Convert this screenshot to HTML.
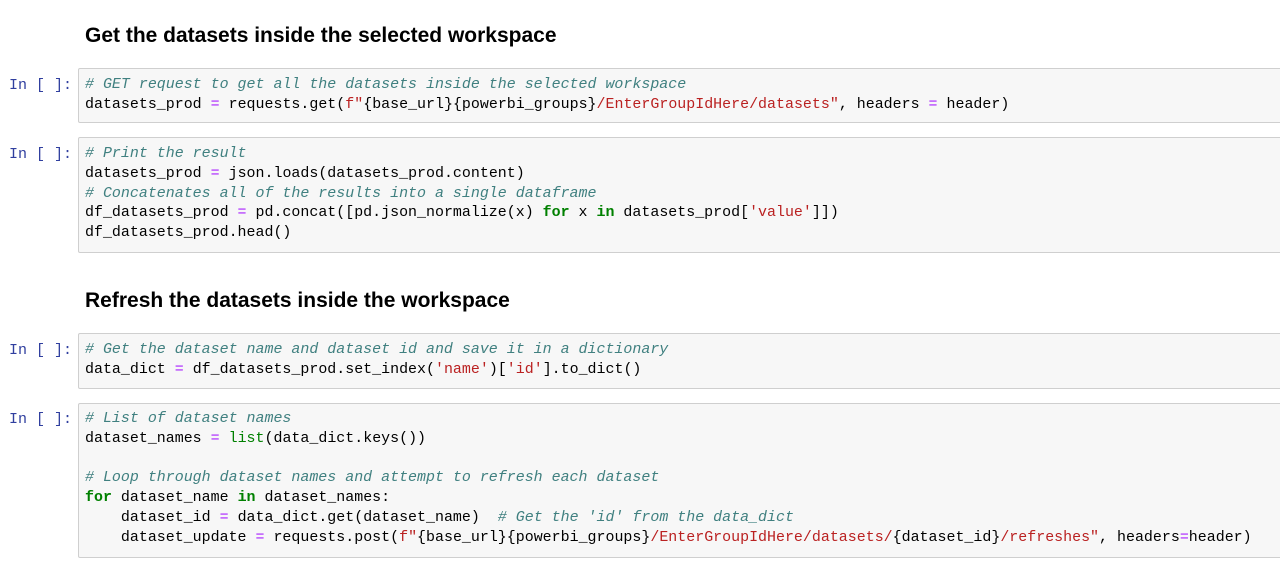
<!DOCTYPE html>
<html><head><meta charset="utf-8"><style>
body{margin:0;width:1280px;height:568px;background:#fff;position:relative;overflow:hidden}
h2{position:absolute;left:85px;margin:0;font:bold 21px "Liberation Sans",sans-serif;color:#000;line-height:24px}
.p{position:absolute;left:9px;font:15px "Liberation Mono",monospace;color:#303F9F;line-height:20px}
.b{position:absolute;left:78px;width:1210px;background:#f7f7f7;border:1px solid #cfcfcf;border-radius:2px;box-sizing:border-box}
pre{position:absolute;left:85px;margin:0;font:14.96px "Liberation Mono",monospace;line-height:19.8px;color:#000}
.c{color:#408080;font-style:italic}.k{color:#008000;font-weight:bold}.s{color:#BA2121}.o{color:#AA22FF}
</style></head><body>
<h2 style="top:24px">Get the datasets inside the selected workspace</h2>
<div class="b" style="top:68px;height:55px"></div>
<div class="p" style="top:76px">In [ ]:</div>
<pre style="top:76px"><span class="c"># GET request to get all the datasets inside the selected workspace</span>
datasets_prod <span class="o">=</span> requests.get(<span class="s">f"</span>{base_url}{powerbi_groups}<span class="s">/EnterGroupIdHere/datasets"</span>, headers <span class="o">=</span> header)</pre>
<div class="b" style="top:137px;height:116px"></div>
<div class="p" style="top:145px">In [ ]:</div>
<pre style="top:145px"><span class="c"># Print the result</span>
datasets_prod <span class="o">=</span> json.loads(datasets_prod.content)
<span class="c"># Concatenates all of the results into a single dataframe</span>
df_datasets_prod <span class="o">=</span> pd.concat([pd.json_normalize(x) <span class="k">for</span> x <span class="k">in</span> datasets_prod[<span class="s">'value'</span>]])
df_datasets_prod.head()</pre>
<h2 style="top:289px">Refresh the datasets inside the workspace</h2>
<div class="b" style="top:333px;height:56px"></div>
<div class="p" style="top:341px">In [ ]:</div>
<pre style="top:341px"><span class="c"># Get the dataset name and dataset id and save it in a dictionary</span>
data_dict <span class="o">=</span> df_datasets_prod.set_index(<span class="s">'name'</span>)[<span class="s">'id'</span>].to_dict()</pre>
<div class="b" style="top:403px;height:155px"></div>
<div class="p" style="top:410px">In [ ]:</div>
<pre style="top:410px"><span class="c"># List of dataset names</span>
dataset_names <span class="o">=</span> <span class="k" style="font-weight:normal">list</span>(data_dict.keys())

<span class="c"># Loop through dataset names and attempt to refresh each dataset</span>
<span class="k">for</span> dataset_name <span class="k">in</span> dataset_names:
    dataset_id <span class="o">=</span> data_dict.get(dataset_name)  <span class="c"># Get the 'id' from the data_dict</span>
    dataset_update <span class="o">=</span> requests.post(<span class="s">f"</span>{base_url}{powerbi_groups}<span class="s">/EnterGroupIdHere/datasets/</span>{dataset_id}<span class="s">/refreshes"</span>, headers<span class="o">=</span>header)</pre>
</body></html>
